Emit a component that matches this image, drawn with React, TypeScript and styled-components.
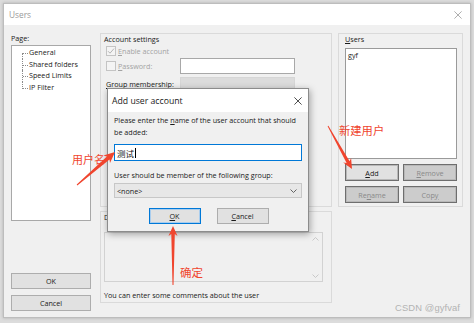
import React from 'react';
import styled, { createGlobalStyle } from 'styled-components';

const GlobalStyle = createGlobalStyle`
  html, body {
    margin: 0;
    padding: 0;
  }
  body {
    width: 474px;
    height: 323px;
    overflow: hidden;
    font-family: 'Open Sans', 'Liberation Sans', sans-serif;
    color: #1a1a1a;
  }
`;

const Screen = styled.div`
  position: relative;
  width: 474px;
  height: 323px;
  box-sizing: border-box;
  padding: 3px 3px 5px 3px;
  display: flex;
  overflow: hidden;
  background: #dcdcdc;
`;

const Window = styled.div`
  flex: 1;
  display: flex;
  flex-direction: column;
  background: #f0f0f0;
  border: 1px solid #bdbdbd;
  box-shadow: 0 0 3px rgba(0, 0, 0, 0.2);
`;

const TitleBar = styled.div`
  height: 21px;
  flex: none;
  display: flex;
  align-items: center;
  justify-content: space-between;
  padding: 0 8px 0 5px;
  background: #fff;
  color: #9a9a9a;
  font-size: 8.3px;
`;

const Body = styled.div`
  flex: 1;
  display: flex;
  padding: 8px 7px 6px 7px;
`;

const LeftCol = styled.div`
  width: 80px;
  margin-right: 9px;
  display: flex;
  flex-direction: column;
`;

const Label = styled.div<{ $muted?: boolean }>`
  font-size: 7.2px;
  line-height: 10px;
  height: 10px;
  white-space: nowrap;
  color: ${(p) => (p.$muted ? '#a3a3a3' : '#1a1a1a')};
`;

const Tree = styled.div`
  margin-top: 2px;
  height: 176px;
  box-sizing: border-box;
  background: #fff;
  border: 1px solid #a8a8a8;
  padding: 1px 0 0 17px;
`;

const TreeItem = styled.div<{ $pos: 'first' | 'mid' | 'last' }>`
  position: relative;
  font-size: 7.2px;
  line-height: 11.7px;
  height: 11.7px;
  white-space: nowrap;

  &::before {
    content: '';
    position: absolute;
    left: -6px;
    width: 5px;
    top: 6px;
    border-top: 1px dotted #8c8c8c;
  }
  &::after {
    content: '';
    position: absolute;
    left: -7px;
    top: ${(p) => (p.$pos === 'first' ? '6px' : '0')};
    bottom: ${(p) => (p.$pos === 'last' ? '5px' : '0')};
    border-left: 1px dotted #8c8c8c;
  }
`;

const Btn = styled.div<{ $disabled?: boolean; $tone?: 'plain' | 'framed' | 'default' }>`
  height: 16px;
  box-sizing: border-box;
  display: flex;
  align-items: center;
  justify-content: center;
  font-size: 7.2px;
  background: ${(p) => (p.$disabled ? '#cccccc' : '#e1e1e1')};
  color: ${(p) => (p.$disabled ? '#8a8a8a' : '#1a1a1a')};
  border: 1px solid
    ${(p) =>
      p.$tone === 'default' ? '#0078d7' : p.$tone === 'framed' ? '#6e6e6e' : '#adadad'};
  box-shadow: ${(p) =>
    p.$tone === 'framed'
      ? 'inset 0 0 0 1px #b8b8b8'
      : p.$tone === 'default'
        ? 'inset 0 0 0 1px #a9cdee'
        : 'none'};

  u {
    text-decoration-thickness: 1px;
    text-underline-offset: 1px;
  }
`;

const Spacer = styled.div`
  flex: 1;
`;

const LeftButtons = styled.div`
  display: flex;
  flex-direction: column;
  gap: 6px;
`;

const MidCol = styled.div`
  width: 232px;
  margin-right: 6px;
  display: flex;
  flex-direction: column;
  gap: 4px;
`;

const Group = styled.div<{ $h: number }>`
  height: ${(p) => p.$h}px;
  box-sizing: border-box;
  border: 1px solid #dadada;
  display: flex;
  flex-direction: column;
  padding: 0 3px 0 3px;
`;

const SettingsGrid = styled.div`
  margin-top: 0;
  padding-left: 2px;
  display: grid;
  grid-template-columns: 74px 115px;
  grid-template-rows: 14px 16px 13px;
  row-gap: 0;
  align-items: center;

  & > :nth-child(5),
  & > :nth-child(6) {
    margin-top: 6px;
  }
`;

const Check = styled.div`
  display: flex;
  align-items: center;
  gap: 2px;
  font-size: 7.2px;
  color: #a3a3a3;
  white-space: nowrap;
`;

const Box = styled.span`
  width: 10px;
  height: 10px;
  box-sizing: border-box;
  border: 1px solid #c4c4c4;
  background: #f4f4f4;
  display: inline-flex;
  align-items: center;
  justify-content: center;
`;

const TextBox = styled.div<{ $disabled?: boolean }>`
  height: 16px;
  box-sizing: border-box;
  border: 1px solid #a8a8a8;
  background: ${(p) => (p.$disabled ? '#e2e2e2' : '#fff')};
`;

const Combo = styled.div<{ $disabled?: boolean }>`
  height: 13px;
  box-sizing: border-box;
  border: 1px solid ${(p) => (p.$disabled ? '#d6d6d6' : '#adadad')};
  background: ${(p) => (p.$disabled ? '#dcdcdc' : '#e5e5e5')};
`;

const CommentBox = styled.div`
  margin-top: 10px;
  width: 219px;
  height: 50px;
  box-sizing: border-box;
  border: 1px solid #d2d2d2;
  background: #f0f0f0;
  display: flex;
  flex-direction: column;
  align-items: flex-end;
  justify-content: space-between;
  padding: 4px 3px 3px 0;
`;

const Hint = styled.div`
  margin-top: 8px;
  font-size: 7.2px;
  line-height: 10px;
  white-space: nowrap;
`;

const RightCol = styled.div`
  width: 125px;
  display: flex;
  flex-direction: column;
`;

const UsersGroup = styled.div`
  height: 174px;
  box-sizing: border-box;
  border: 1px solid #dadada;
  padding: 0 5px 0 6px;
  display: flex;
  flex-direction: column;
`;

const ListBox = styled.div`
  margin-top: 4px;
  width: 112px;
  height: 111px;
  box-sizing: border-box;
  border: 1px solid #9a9a9a;
  background: #fff;
  padding: 1px 2px;
  font-size: 7.2px;
  line-height: 10px;
`;

const ButtonGrid = styled.div`
  margin-top: 5px;
  width: 112px;
  display: grid;
  grid-template-columns: 54px 54px;
  grid-auto-rows: 17px;
  gap: 5px 4px;

  & > div {
    height: 17px;
  }
`;

/* ---- dialog ---- */

const Dialog = styled.div`
  position: absolute;
  left: 107px;
  top: 88px;
  width: 202px;
  height: 144px;
  box-sizing: border-box;
  background: #f0f0f0;
  border: 1px solid #8c8c8c;
  box-shadow: 1px 2px 7px rgba(0, 0, 0, 0.35);
  display: flex;
  flex-direction: column;
`;

const DialogTitle = styled.div`
  height: 23px;
  flex: none;
  display: flex;
  align-items: center;
  justify-content: space-between;
  padding: 0 6px 0 4px;
  background: #fff;
  font-size: 8.7px;
  color: #1a1a1a;
`;

const DialogBody = styled.div`
  padding: 2px 6px 0 6px;
  display: flex;
  flex-direction: column;
`;

const Prompt = styled.div`
  font-size: 7.2px;
  line-height: 12px;

  u {
    text-underline-offset: 1px;
  }
`;

const NameInput = styled.div`
  margin-top: 6px;
  height: 17px;
  box-sizing: border-box;
  border: 1px solid #0078d7;
  background: #fff;
  display: flex;
  align-items: center;
  padding-left: 2px;
  font-family: 'Noto Sans CJK SC', sans-serif;
  font-size: 8.5px;
  color: #111;
`;

const Caret = styled.span`
  display: inline-block;
  width: 1px;
  height: 10px;
  background: #000;
  margin-left: 1px;
`;

const GroupSelect = styled.div`
  margin-top: 2px;
  height: 15px;
  box-sizing: border-box;
  border: 1px solid #c7c7c7;
  background: #e7e7e7;
  display: flex;
  align-items: center;
  justify-content: space-between;
  padding: 0 4px 0 2px;
  font-size: 7.2px;
`;

const DialogButtons = styled.div`
  margin-top: 10px;
  display: flex;
  justify-content: center;
  gap: 16px;
  padding-left: 1px;

  & > div {
    width: 52px;
    height: 16px;
  }
`;

/* ---- annotations ---- */

const Overlay = styled.svg`
  position: absolute;
  left: 0;
  top: 0;
  pointer-events: none;
`;

const Note = styled.div<{ $x: number; $y: number; $size: number }>`
  position: absolute;
  left: ${(p) => p.$x}px;
  top: ${(p) => p.$y}px;
  font-family: 'Noto Sans CJK SC', sans-serif;
  font-size: ${(p) => p.$size}px;
  line-height: 1;
  color: #f0452e;
  white-space: nowrap;
`;

const Watermark = styled.div`
  position: absolute;
  right: 14px;
  bottom: 10px;
  font-family: 'Liberation Sans', sans-serif;
  font-size: 9.4px;
  color: #b3b3b3;
  letter-spacing: 0.1px;
`;

const arrow = (
  x1: number,
  y1: number,
  x2: number,
  y2: number,
  headLen: number,
  headW: number,
  tailW: number,
  neckW: number,
) => {
  const dx = x2 - x1;
  const dy = y2 - y1;
  const len = Math.hypot(dx, dy);
  const ux = dx / len;
  const uy = dy / len;
  const px = -uy;
  const py = ux;
  const bx = x2 - ux * headLen;
  const by = y2 - uy * headLen;
  const sx = bx + ux * 2;
  const sy = by + uy * 2;
  const pts = [
    [x1 + (px * tailW) / 2, y1 + (py * tailW) / 2],
    [sx + (px * neckW) / 2, sy + (py * neckW) / 2],
    [bx + (px * headW) / 2, by + (py * headW) / 2],
    [x2, y2],
    [bx - (px * headW) / 2, by - (py * headW) / 2],
    [sx - (px * neckW) / 2, sy - (py * neckW) / 2],
    [x1 - (px * tailW) / 2, y1 - (py * tailW) / 2],
  ];
  return pts.map((p) => p.map((v) => v.toFixed(1)).join(',')).join(' ');
};

const CloseIcon = ({ color, size }: { color: string; size: number }) => (
  <svg width={size} height={size} viewBox="0 0 10 10">
    <path d="M0.5 0.5 L9.5 9.5 M9.5 0.5 L0.5 9.5" stroke={color} strokeWidth="1" fill="none" />
  </svg>
);

const Chevron = ({ up, color }: { up?: boolean; color: string }) => (
  <svg width="7" height="4" viewBox="0 0 7 4">
    <path
      d={up ? 'M0.5 3.5 L3.5 0.5 L6.5 3.5' : 'M0.5 0.5 L3.5 3.5 L6.5 0.5'}
      stroke={color}
      strokeWidth="0.9"
      fill="none"
    />
  </svg>
);

const CheckMark = () => (
  <svg width="8" height="8" viewBox="0 0 8 8">
    <path d="M1 4.2 L3 6.2 L7 1.6" stroke="#b5b5b5" strokeWidth="1" fill="none" />
  </svg>
);

const pages = ['General', 'Shared folders', 'Speed Limits', 'IP Filter'];

export default function App() {
  return (
    <>
      <GlobalStyle />
      <Screen>
        <Window>
          <TitleBar>
            <span>Users</span>
            <CloseIcon color="#9a9a9a" size={8} />
          </TitleBar>
          <Body>
            <LeftCol>
              <Label>Page:</Label>
              <Tree>
                {pages.map((p, i) => (
                  <TreeItem key={p} $pos={i === 0 ? 'first' : i === pages.length - 1 ? 'last' : 'mid'}>
                    {p}
                  </TreeItem>
                ))}
              </Tree>
              <Spacer />
              <LeftButtons>
                <Btn>OK</Btn>
                <Btn>Cancel</Btn>
              </LeftButtons>
            </LeftCol>

            <MidCol>
              <Group $h={174}>
                <Label>Account settings</Label>
                <SettingsGrid>
                  <Check>
                    <Box>
                      <CheckMark />
                    </Box>
                    <span>
                      <u>E</u>nable account
                    </span>
                  </Check>
                  <span />
                  <Check>
                    <Box />
                    <span>
                      <u>P</u>assword:
                    </span>
                  </Check>
                  <TextBox />
                  <Label>
                    <u>G</u>roup membership:
                  </Label>
                  <Combo $disabled />
                </SettingsGrid>
              </Group>
              <Group $h={92}>
                <Label>Description</Label>
                <CommentBox>
                  <Chevron up color="#c4c4c4" />
                  <Chevron color="#c4c4c4" />
                </CommentBox>
                <Hint>You can enter some comments about the user</Hint>
              </Group>
            </MidCol>

            <RightCol>
              <UsersGroup>
                <Label>
                  <u>U</u>sers
                </Label>
                <ListBox>gyf</ListBox>
                <ButtonGrid>
                  <Btn $tone="framed">
                    <u>A</u>dd
                  </Btn>
                  <Btn $tone="framed" $disabled>
                    <u>R</u>emove
                  </Btn>
                  <Btn $tone="framed" $disabled>
                    Re<u>n</u>ame
                  </Btn>
                  <Btn $tone="framed" $disabled>
                    Cop<u>y</u>
                  </Btn>
                </ButtonGrid>
              </UsersGroup>
            </RightCol>
          </Body>
        </Window>

        <Dialog>
          <DialogTitle>
            <span>Add user account</span>
            <CloseIcon color="#222" size={8} />
          </DialogTitle>
          <DialogBody>
            <Prompt>
              Please enter the <u>n</u>ame of the user account that should
              <br />
              be added:
            </Prompt>
            <NameInput>
              测试
              <Caret />
            </NameInput>
            <Prompt style={{ marginTop: 8 }}>User should be member of the following group:</Prompt>
            <GroupSelect>
              <span>&lt;none&gt;</span>
              <Chevron color="#555" />
            </GroupSelect>
            <DialogButtons>
              <Btn $tone="default">
                <u>O</u>K
              </Btn>
              <Btn>
                <u>C</u>ancel
              </Btn>
            </DialogButtons>
          </DialogBody>
        </Dialog>

        <Overlay width={474} height={323} viewBox="0 0 474 323">
          <polygon points={arrow(77, 185, 115, 152, 11, 10, 1, 4)} fill="#f0452e" />
          <polygon points={arrow(328, 126, 352, 169, 10, 9, 1, 3.5)} fill="#f0452e" />
          <polygon points={arrow(173, 285, 173, 226, 10, 9, 1, 3.5)} fill="#f0452e" />
        </Overlay>
        <Note $x={72} $y={154} $size={11}>
          用户名
        </Note>
        <Note $x={339} $y={125} $size={11.3}>
          新建用户
        </Note>
        <Note $x={180} $y={267} $size={11.5}>
          确定
        </Note>
        <Watermark>CSDN @gyfvaf</Watermark>
      </Screen>
    </>
  );
}
